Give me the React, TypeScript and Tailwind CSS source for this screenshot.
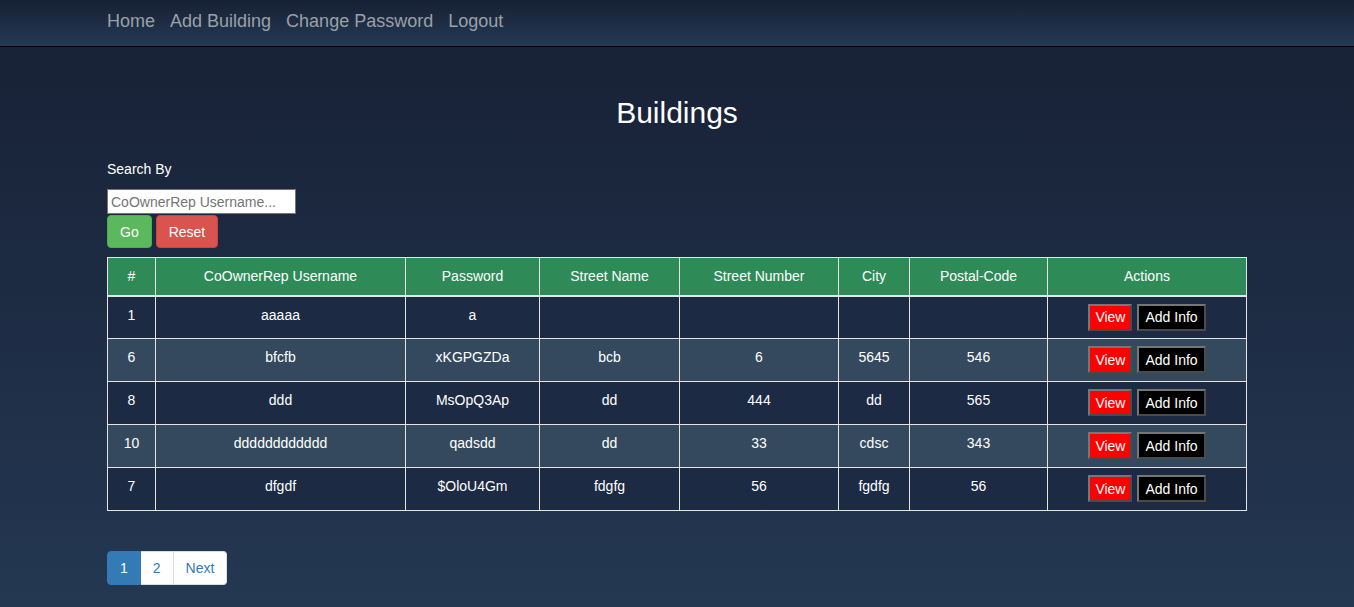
import React from "react";

const rows = [
  ["1", "aaaaa", "a", "", "", "", ""],
  ["6", "bfcfb", "xKGPGZDa", "bcb", "6", "5645", "546"],
  ["8", "ddd", "MsOpQ3Ap", "dd", "444", "dd", "565"],
  ["10", "dddddddddddd", "qadsdd", "dd", "33", "cdsc", "343"],
  ["7", "dfgdf", "$OloU4Gm", "fdgfg", "56", "fgdfg", "56"],
];

const headers = ["#", "CoOwnerRep Username", "Password", "Street Name", "Street Number", "City", "Postal-Code", "Actions"];
const widths = ["w-[48px]", "w-[250px]", "w-[134px]", "w-[140px]", "w-[159px]", "w-[71px]", "w-[138px]", "w-[199px]"];

export default function App() {
  return (
    <div
      className="min-h-screen bg-gradient-to-b from-[#172035] to-[#243852] text-white text-[14px] leading-[20px]"
      style={{ fontFamily: '"Liberation Sans", Arial, sans-serif' }}
    >
      <nav className="h-[47px] bg-gradient-to-b from-[#172034] to-[#243a55] border-b border-black">
        <div className="w-[1140px] mx-auto flex gap-[15px] pt-[10px] text-[18px] leading-[22px] text-[#9aa0a6]">
          <a>Home</a>
          <a>Add Building</a>
          <a>Change Password</a>
          <a>Logout</a>
        </div>
      </nav>
      <div className="w-[1140px] mx-auto">
        <h2 className="text-center text-[30px] leading-[33px] mt-[49px]">Buildings</h2>
        <div className="mt-[30px] leading-[20px]">Search By</div>
        <div className="mt-[10px]">
          <input
            className="w-[189px] h-[25px] bg-white border border-[#767676] px-[3px] text-[14px] text-black placeholder:text-[#757575] outline-none"
            placeholder="CoOwnerRep Username..."
          />
        </div>
        <div className="flex gap-[4px] mt-[1px]">
          <button className="h-[33px] px-[12px] bg-[#5cb85c] border border-[#4cae4c] rounded-[4px] text-white text-[14px]">Go</button>
          <button className="h-[33px] px-[12px] bg-[#d9534f] border border-[#d43f3a] rounded-[4px] text-white text-[14px]">Reset</button>
        </div>
        <table className="mt-[9px] w-[1139px] table-fixed border-collapse">
          <thead>
            <tr className="bg-[#2e8b57]">
              {headers.map((h, i) => (
                <th
                  key={h}
                  className={`${widths[i]} font-normal text-center px-[8px] pt-[8px] pb-[8px] h-[38px] border border-[#e5e5e5] border-b-2`}
                >
                  {h}
                </th>
              ))}
            </tr>
          </thead>
          <tbody>
            {rows.map((r, ri) => (
              <tr key={ri} className={ri % 2 === 0 ? "bg-[#1c2a44]" : "bg-[#34495e]"}>
                {r.map((c, ci) => (
                  <td key={ci} className="text-center align-top px-[8px] pt-[8px] h-[43px] border border-[#e5e5e5]">
                    {c}
                  </td>
                ))}
                <td className="text-center align-top pt-[7px] h-[43px] border border-[#e5e5e5]">
                  <div className="flex justify-center gap-[5px]">
                    <button className="h-[27px] px-[5px] bg-[#ff0000] text-white border-2 border-[#767676] border-b-[#4a4a4a] border-r-[#4a4a4a] text-[14px] leading-[20px]">View</button>
                    <button className="h-[27px] px-[6px] bg-black text-white border-2 border-[#767676] border-b-[#4a4a4a] border-r-[#4a4a4a] text-[14px] leading-[20px]">Add Info</button>
                  </div>
                </td>
              </tr>
            ))}
          </tbody>
        </table>
        <div className="mt-[40px] flex">
          <span className="h-[34px] px-[12px] flex items-center bg-[#337ab7] border border-[#337ab7] text-white rounded-l-[4px]">1</span>
          <span className="h-[34px] px-[12px] flex items-center bg-white border border-[#ddd] border-l-0 text-[#337ab7]">2</span>
          <span className="h-[34px] px-[12px] flex items-center bg-white border border-[#ddd] border-l-0 text-[#337ab7] rounded-r-[4px]">Next</span>
        </div>
      </div>
    </div>
  );
}
